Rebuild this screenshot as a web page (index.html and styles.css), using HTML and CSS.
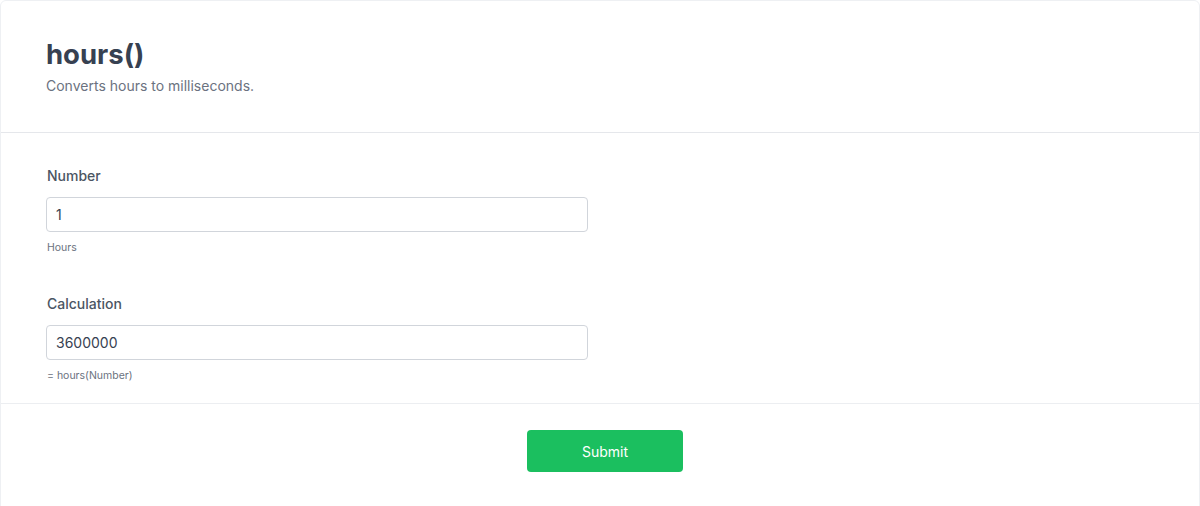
FILE: index.html
```html
<!DOCTYPE html>
<html lang="en">
<head>
<meta charset="utf-8">
<title>hours()</title>
<link rel="stylesheet" href="styles.css">
</head>
<body>
<div class="card">
  <header class="header">
    <h1 class="title">hours()</h1>
    <p class="subtitle">Converts hours to milliseconds.</p>
  </header>
  <section class="fields">
    <div class="field">
      <label class="label" for="num">Number</label>
      <input class="input" id="num" type="text" value="1">
      <p class="help">Hours</p>
    </div>
    <div class="field">
      <label class="label" for="calc">Calculation</label>
      <input class="input" id="calc" type="text" value="3600000">
      <p class="help">= hours(Number)</p>
    </div>
  </section>
  <footer class="footer">
    <button class="submit" type="button">Submit</button>
  </footer>
</div>
</body>
</html>
```

FILE: styles.css
```css
* { box-sizing: border-box; }
html, body { margin: 0; padding: 0; background: #ffffff; }
body {
  font-family: Inter, "Noto Sans", "Liberation Sans", sans-serif;
  color: #374151;
}
.card {
  border: 1px solid #eef0f3;
  border-radius: 6px;
  min-height: 520px;
}
.header {
  padding: 35px 45px 36px;
  border-bottom: 1px solid #e5e7eb;
}
.title {
  margin: 0;
  font-size: 27.5px;
  line-height: 36px;
  font-weight: 700;
  color: #374151;
}
.subtitle {
  margin: 4px 0 0;
  font-size: 14px;
  line-height: 20px;
  color: #6b7280;
}
.fields {
  padding: 33px 45px 19px;
  border-bottom: 1px solid #eceef1;
  display: flex;
  flex-direction: column;
  gap: 38px;
}
.field {
  display: flex;
  flex-direction: column;
  max-width: 542px;
}
.label {
  font-size: 14px;
  line-height: 20px;
  font-weight: 500;
  color: #4b5563;
  padding-left: 1px;
  margin-bottom: 11px;
}
.input {
  height: 35px;
  width: 100%;
  border: 1px solid #d1d5db;
  border-radius: 4px;
  padding: 0 9px;
  font-family: inherit;
  font-size: 14px;
  color: #374151;
  background: #fff;
  outline: none;
}
.help {
  margin: 8px 0 0 1px;
  font-size: 10.5px;
  line-height: 16px;
  color: #6b7280;
}
.footer {
  padding: 26px 0 0 10px;
  display: flex;
  justify-content: center;
}
.submit {
  width: 156px;
  height: 42px;
  border: none;
  border-radius: 4px;
  background: #1bbf5f;
  color: #ffffff;
  font-family: inherit;
  font-size: 14px;
  cursor: pointer;
}
```
